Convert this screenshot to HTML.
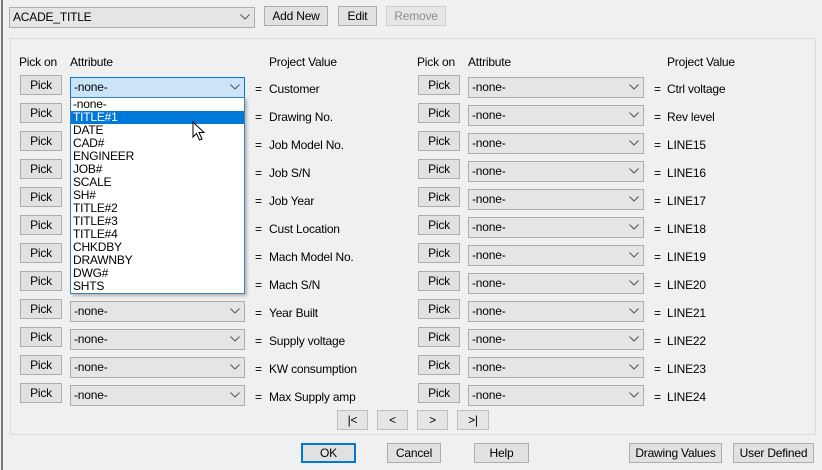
<!DOCTYPE html>
<html><head><meta charset="utf-8"><style>
*{box-sizing:border-box;margin:0;padding:0}
body{width:822px;height:470px;background:#f0f0f0;font-family:"Liberation Sans",sans-serif;font-size:12px;color:#000;position:relative;overflow:hidden;letter-spacing:-0.2px}
.a{position:absolute}
.btn{position:absolute;background:#e1e1e1;border:1px solid #adadad;text-align:center;height:20px;line-height:18px}
.cb{position:absolute;background:#e5e5e5;border:1px solid #adadad;height:21px;line-height:19px;padding-left:3px}
.cb svg{position:absolute;right:4px;top:6px}
.t{position:absolute;white-space:nowrap}
.dd{position:absolute;left:70px;top:97px;width:175px;height:197px;background:#fff;border:1px solid #3c7fb1;box-shadow:2px 2px 3px rgba(0,0,0,.25)}
.dd div{height:13px;line-height:13px;padding-left:2px}
</style></head><body>
<div class="a" style="left:1px;top:0;width:2px;height:470px;background:#7a7a7a"></div>
<div class="cb" style="left:9px;top:7px;width:246px;height:21px">ACADE_TITLE<svg width="10" height="6"><path d="M0.5 0.5L5 5L9.5 0.5" stroke="#555" fill="none"/></svg></div>
<div class="btn" style="left:264px;top:6px;width:64px">Add New</div>
<div class="btn" style="left:338px;top:6px;width:39px">Edit</div>
<div class="btn" style="left:386px;top:6px;width:60px;color:#8d8d8d;border-color:#cccccc;background:#e6e6e6">Remove</div>
<div class="a" style="left:10px;top:38px;width:806px;height:397px;border:1px solid #dcdcdc"></div>
<div class="t" style="left:19px;top:55px">Pick on</div>
<div class="t" style="left:70px;top:55px">Attribute</div>
<div class="t" style="left:269px;top:55px">Project Value</div>
<div class="t" style="left:417px;top:55px">Pick on</div>
<div class="t" style="left:468px;top:55px">Attribute</div>
<div class="t" style="left:667px;top:55px">Project Value</div>
<div id="rows"></div>
<div class="btn" style="left:337px;top:410px;width:31px;background:#e5e5e5;border-color:#c0c0c0">|&lt;</div>
<div class="btn" style="left:377px;top:410px;width:31px;background:#e5e5e5;border-color:#c0c0c0">&lt;</div>
<div class="btn" style="left:417px;top:410px;width:31px;background:#e5e5e5;border-color:#c0c0c0">&gt;</div>
<div class="btn" style="left:457px;top:410px;width:32px;background:#e5e5e5;border-color:#c0c0c0">&gt;|</div>
<div class="btn" style="left:301px;top:443px;width:55px;border:2px solid #0078d7;line-height:16px">OK</div>
<div class="btn" style="left:387px;top:443px;width:54px">Cancel</div>
<div class="btn" style="left:474px;top:443px;width:55px">Help</div>
<div class="btn" style="left:629px;top:443px;width:93px">Drawing Values</div>
<div class="btn" style="left:733px;top:443px;width:81px">User Defined</div>
<div class="dd">
<div>-none-</div><div style="background:#0078d7;color:#fff">TITLE#1</div><div>DATE</div><div>CAD#</div><div>ENGINEER</div><div>JOB#</div><div>SCALE</div><div>SH#</div><div>TITLE#2</div><div>TITLE#3</div><div>TITLE#4</div><div>CHKDBY</div><div>DRAWNBY</div><div>DWG#</div><div>SHTS</div>
</div>
<svg class="a" style="left:192px;top:121px" width="14" height="20"><path d="M1 1L1 16L4.5 12.5L7.5 19L10 18L7 11.5L12 11.5Z" fill="#fff" stroke="#000" stroke-width="1"/></svg>
<script>
var L=["Customer","Drawing No.","Job Model No.","Job S/N","Job Year","Cust Location","Mach Model No.","Mach S/N","Year Built","Supply voltage","KW consumption","Max Supply amp"];
var R=["Ctrl voltage","Rev level","LINE15","LINE16","LINE17","LINE18","LINE19","LINE20","LINE21","LINE22","LINE23","LINE24"];
var h="",chev='<svg width="10" height="6"><path d="M0.5 0.5L5 5L9.5 0.5" stroke="#555" fill="none"/></svg>';
for(var i=0;i<12;i++){var y=75+i*28;
[[20,70,255,269,L[i]],[418,468,654,667,R[i]]].forEach(function(c,k){
h+='<div class="btn" style="left:'+c[0]+'px;top:'+y+'px;width:42px">Pick</div>';
if(!(k==0&&i>0&&i<8)){var st=(k==0&&i==0)?'background:#cce4f7;border-color:#0078d7;':'';
h+='<div class="cb" style="'+st+'left:'+c[1]+'px;top:'+(y+2)+'px;width:'+(k?176:175)+'px">-none-'+chev+'</div>';}
h+='<div class="t" style="left:'+c[2]+'px;top:'+(y+7)+'px">=</div><div class="t" style="left:'+c[3]+'px;top:'+(y+7)+'px">'+c[4]+'</div>';});}
document.getElementById("rows").innerHTML=h;
</script>
</body></html>
